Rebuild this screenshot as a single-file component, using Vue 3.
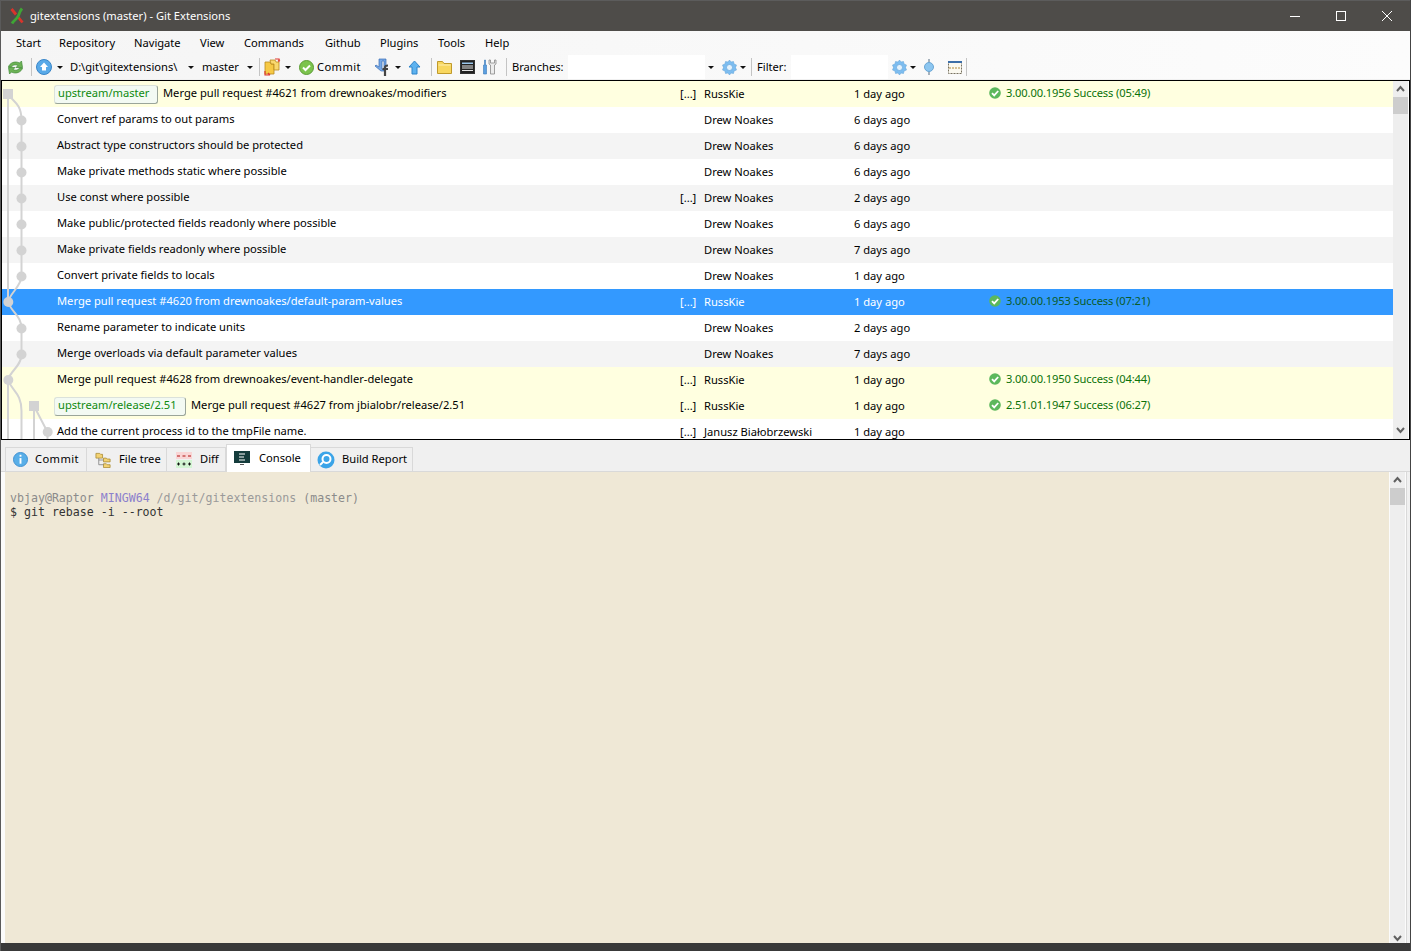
<template>
  <div class="window">
    <header class="titlebar">
      <svg class="app-logo" width="16" height="18" viewBox="0 0 16 18">
        <path d="M2.500 2l4.500 5.500M9.500 10.500l4 5" stroke="#d9342b" stroke-width="2.800" fill="none" />
        <path d="M3 16.500c1.500-3 4.500-4 6-7s1.500-5 4-8" stroke="#3fa535" stroke-width="2.800" fill="none" />
      </svg>
      <span class="title-text">gitextensions (master) - Git Extensions</span>
      <div class="window-btns">
        <svg width="46" height="30" viewBox="0 0 46 30"><path d="M18 15.500h10" stroke="#fff" /></svg>
        <svg width="46" height="30" viewBox="0 0 46 30"><rect x="18.500" y="10.500" width="9" height="9" fill="none" stroke="#fff" /></svg>
        <svg width="46" height="30" viewBox="0 0 46 30"><path d="M18 10l10 10M28 10l-10 10" stroke="#fff" /></svg>
      </div>
    </header>

    <nav class="menubar">
      <span v-for="m in menus" :key="m.label" class="menu-item" :style="{ width: m.w + 'px' }">{{ m.label }}</span>
    </nav>

    <div class="toolbar">
      <svg class="ic ml-7" width="17" height="15" viewBox="0 0 17 15">
        <g fill="#6db356" stroke="#418a38" stroke-width=".7">
          <path d="M1.500 7C2.500 3 8 .5 12.500 3L14.500 1l1 6.500-6.500 0 2-2C8.500 4 5.500 5 4.500 7z" />
          <path d="M15.500 8C14.500 12 9 14.500 4.500 12L2.500 14l-1-6.500 6.500 0-2 2C8.500 11 11.500 10 12.500 8z" />
        </g>
      </svg>
      <i class="sep s1"></i>
      <svg class="ic s2" width="16" height="16" viewBox="0 0 16 16">
        <circle cx="8" cy="8" r="7.500" fill="#58a9e8" stroke="#3a86c8" />
        <path d="M8 3.500l4 4.500H10v3.500H6V8H4z" fill="#fff" />
      </svg>
      <i class="caret s3"></i>
      <span class="tb-text t-path">D:\git\gitextensions\</span>
      <i class="caret s4"></i>
      <span class="tb-text t-branch">master</span>
      <i class="caret s5"></i>
      <i class="sep s6"></i>
      <svg class="ic s7" width="17" height="18" viewBox="0 0 17 18">
        <path d="M1 4h5l1 2h3v10H1z" fill="#f6c945" stroke="#b98a1e" stroke-width=".8" />
        <path d="M6 2h5l1 2h3v8h-5V6H7z" fill="#f9d86e" stroke="#b98a1e" stroke-width=".8" />
        <path d="M11 1h4v3M14 3l2-1M1 13v4h5M4 15l2 2" stroke="#e0392f" fill="none" stroke-width="1.200" />
      </svg>
      <i class="caret s8"></i>
      <svg class="ic s9" width="15" height="15" viewBox="0 0 15 15">
        <circle cx="7.500" cy="7.500" r="7" fill="#7cc34d" stroke="#5c9c35" />
        <path d="M4 7.500l2.500 2.500 4.500-4.500" fill="none" stroke="#fff" stroke-width="2" />
      </svg>
      <span class="tb-text t-commit">Commit</span>
      <svg class="ic s10" width="17" height="19" viewBox="0 0 17 19">
        <path d="M5 1h7v7l-2 2v-7H8v8l2 2-3 0-6-5 1-1 3 2z" fill="#76a8e6" stroke="#3a6fb5" stroke-width=".7" />
        <path d="M11 18V9.500c0-1.500 1-2 3-2M8.500 11H14" fill="none" stroke="#444" stroke-width="2.200" />
      </svg>
      <i class="caret s11"></i>
      <svg class="ic s12" width="13" height="15" viewBox="0 0 13 15">
        <path d="M6.500 1L12 7H9v7H4V7H1z" fill="#5db2ef" stroke="#2f84c9" />
      </svg>
      <i class="sep s13"></i>
      <svg class="ic s14" width="15" height="14" viewBox="0 0 15 14">
        <path d="M.5 1.500h5l1.500 2h7.500v10H.5z" fill="#f8d760" stroke="#c09a2c" />
        <path d="M1.500 5h12" stroke="#fdeeb0" />
      </svg>
      <svg class="ic s15" width="15" height="14" viewBox="0 0 15 14">
        <rect x=".5" y=".5" width="14" height="13" fill="#222" stroke="#333" />
        <path d="M2 2.500h11v1.500H2z" fill="#9cc8ee" />
        <path d="M2 6h11M2 8h11M2 10.500h11" stroke="#e4e4e4" />
      </svg>
      <svg class="ic s16" width="16" height="16" viewBox="0 0 16 16">
        <path d="M2.500 1v5h-1v9h3V6h-1V1z" fill="#5b9fe0" stroke="#3a78b8" stroke-width=".6" />
        <path d="M7 1v4l1.500 1v9h4V6L14 5V1h-1.500v3h-4V1z" fill="#ececec" stroke="#888" stroke-width=".8" />
      </svg>
      <i class="sep s17"></i>
      <span class="tb-text t-branches">Branches:</span>
      <span class="field f-branches"></span>
      <i class="caret s18"></i>
      <svg class="ic s19" width="15" height="15" viewBox="0 0 15 15">
        <path d="M7.500 0l1.500 2 2.500-.5.500 2.500 2.500 1-1 2.500 1 2.500-2.500 1-.5 2.500-2.500-.5L7.500 15 6 13l-2.500.5L3 11 .5 10l1-2.500-1-2.500L3 4l.5-2.500L6 2z" fill="#7dbdf0" stroke="#5a9ed6" stroke-width=".5" />
        <circle cx="7.500" cy="7.500" r="3" fill="#e3f2fd" stroke="#5a9ed6" stroke-width=".6" />
      </svg>
      <i class="caret s20"></i>
      <i class="sep s21"></i>
      <span class="tb-text t-filter">Filter:</span>
      <span class="field f-filter"></span>
      <svg class="ic s22" width="15" height="15" viewBox="0 0 15 15">
        <path d="M7.500 0l1.500 2 2.500-.5.500 2.500 2.500 1-1 2.500 1 2.500-2.500 1-.5 2.500-2.500-.5L7.500 15 6 13l-2.500.5L3 11 .5 10l1-2.500-1-2.500L3 4l.5-2.500L6 2z" fill="#7dbdf0" stroke="#5a9ed6" stroke-width=".5" />
        <circle cx="7.500" cy="7.500" r="3" fill="#e3f2fd" stroke="#5a9ed6" stroke-width=".6" />
      </svg>
      <i class="caret s23"></i>
      <svg class="ic s24" width="12" height="16" viewBox="0 0 12 16">
        <path d="M6 0v16" stroke="#8a9aa8" stroke-width="1.500" />
        <circle cx="6" cy="8" r="4.500" fill="#8cc6f0" stroke="#6ba6d4" />
      </svg>
      <svg class="ic s25" width="14" height="13" viewBox="0 0 14 13">
        <rect x=".5" y="1.500" width="13" height="11" fill="#fbf9f0" stroke="#77715f" stroke-dasharray="2 1" />
        <path d="M0 1h14" stroke="#3c6ea8" stroke-width="2" />
        <path d="M1 7h12" stroke="#b08a3c" stroke-dasharray="2 1" />
      </svg>
      <i class="sep s26"></i>
    </div>

    <section class="revisions">
      <div class="rows">
        <div
          v-for="(c, i) in commits"
          :key="i"
          class="row"
          :class="{ alt: i % 2 === 0 && i > 0, mine: c.hl, selected: c.sel }"
        >
          <div class="c-msg" :class="{ 'has-ref': c.ref }">
            <span v-if="c.ref" class="ref" :style="{ width: c.refW + 'px' }">{{ c.ref }}</span>
            <span>{{ c.msg }}</span>
          </div>
          <div class="c-more">{{ c.more ? '[...]' : '' }}</div>
          <div class="c-author">{{ c.author }}</div>
          <div class="c-date">{{ c.date }}</div>
          <div class="c-build">
            <template v-if="c.build">
              <svg width="12" height="12" viewBox="0 0 12 12">
                <circle cx="6" cy="6" r="5.800" fill="#5cb85c" />
                <path d="M3 6.200l2.200 2.200L9.200 4" fill="none" stroke="#fff" stroke-width="1.800" />
              </svg>
              <span>{{ c.build }}</span>
            </template>
          </div>
        </div>
      </div>

      <svg class="graph" width="60" height="358" viewBox="0 0 60 358">
        <g fill="none" stroke="#d3d3d3" stroke-width="2">
          <path d="M6 13V221" />
          <path d="M6 13c4 7 13.500 9 13.500 26V195c0 10-11.500 17-13.500 26" />
          <path d="M6 221c4 11 13.500 14 13.500 26.500v26c0 11.500-11.500 16.500-13.500 25.500" />
          <path d="M6 299V360" />
          <path d="M6 299c4 11 13.500 13 13.500 31V360" />
          <path d="M32 325V360" />
          <path d="M32 325l13.500 26V360" />
        </g>
        <g fill="#d3d3d3">
          <rect x="1" y="8" width="10" height="10" />
          <circle v-for="n in graphNodes" :key="n.y" :cx="n.x" :cy="n.y" r="5" />
          <rect x="27" y="320" width="10" height="10" />
        </g>
      </svg>

      <div class="vscroll v1">
        <svg width="15" height="16" viewBox="0 0 15 16"><path d="M4 10l3.500-4 3.500 4" fill="none" stroke="#606060" stroke-width="2" /></svg>
        <div class="thumb"></div>
        <div class="grow"></div>
        <svg class="arrow-down" width="15" height="16" viewBox="0 0 15 16"><path d="M4 6l3.500 4 3.500-4" fill="none" stroke="#606060" stroke-width="2" /></svg>
      </div>
    </section>

    <div class="tabs">
      <div v-for="t in tabs" :key="t.label" class="tab" :class="['tab-' + t.icon, { active: t.active }]" :style="{ width: t.w + 'px' }">
        <svg v-if="t.icon === 'commit'" width="15" height="15" viewBox="0 0 16 16">
          <circle cx="8" cy="8" r="7.500" fill="#58aee8" stroke="#3f8fd0" />
          <rect x="7" y="3" width="2" height="2" fill="#fff" />
          <rect x="7" y="6.500" width="2" height="6" fill="#fff" />
        </svg>
        <svg v-else-if="t.icon === 'tree'" width="17" height="16" viewBox="0 0 18 16">
          <path d="M1 1h4l1 1h2v4H1zM9 6h3l1 1h3v3H9zM9 12h3l1 1h3v3H9z" fill="#f3d273" stroke="#a8892f" stroke-width=".8" />
          <path d="M4 6v7h5M4 8h5" fill="none" stroke="#777" stroke-width=".8" />
        </svg>
        <svg v-else-if="t.icon === 'diff'" width="16" height="16" viewBox="0 0 16 16">
          <rect width="16" height="7" fill="#f9d5d5" />
          <rect y="8" width="16" height="8" fill="#d3f5d3" />
          <path d="M1 4h3M6.500 4h3M12 4h3" stroke="#b01010" />
          <path d="M1 12h3M2.500 10.500v3M6.500 12h3M8 10.500v3M12 12h3M13.500 10.500v3" stroke="#111" />
        </svg>
        <svg v-else-if="t.icon === 'console'" width="16" height="16" viewBox="0 0 16 16">
          <rect width="16" height="12" fill="#143c3c" />
          <path d="M5 3h6M5 6h5M5 9h6" stroke="#fff" />
          <rect x="6" y="13" width="4" height="1" fill="#555" />
        </svg>
        <svg v-else width="18" height="18" viewBox="0 0 18 18">
          <circle cx="9" cy="9" r="8.500" fill="#3ba4e8" />
          <circle cx="9.500" cy="8" r="4" fill="none" stroke="#fff" stroke-width="2" />
          <path d="M6 11l-3 3" stroke="#fff" stroke-width="2" />
        </svg>
        <span>{{ t.label }}</span>
      </div>
    </div>

    <section class="console-pane">
      <div class="console">
        <div class="prompt"><span class="p-user">vbjay@Raptor</span> <span class="p-host">MINGW64</span> <span class="p-path">/d/git/gitextensions</span> <span class="p-user">(master)</span></div>
        <div class="cmd">$ git rebase -i --root</div>
      </div>
      <div class="vscroll v2">
        <svg width="15" height="16" viewBox="0 0 15 16"><path d="M4 10l3.500-4 3.500 4" fill="none" stroke="#606060" stroke-width="2" /></svg>
        <div class="thumb"></div>
        <div class="grow"></div>
        <svg class="arrow-down" width="15" height="16" viewBox="0 0 15 16"><path d="M4 6l3.500 4 3.500-4" fill="none" stroke="#606060" stroke-width="2" /></svg>
      </div>
    </section>

    <footer class="bottom"></footer>
  </div>
</template>

<script setup>
const menus = [
  { label: 'Start', w: 43 },
  { label: 'Repository', w: 75 },
  { label: 'Navigate', w: 66 },
  { label: 'View', w: 44 },
  { label: 'Commands', w: 81 },
  { label: 'Github', w: 55 },
  { label: 'Plugins', w: 58 },
  { label: 'Tools', w: 47 },
  { label: 'Help', w: 40 },
]

const commits = [
  { ref: 'upstream/master', refW: 104, msg: 'Merge pull request #4621 from drewnoakes/modifiers', more: true, author: 'RussKie', date: '1 day ago', build: '3.00.00.1956 Success (05:49)', hl: true },
  { msg: 'Convert ref params to out params', author: 'Drew Noakes', date: '6 days ago' },
  { msg: 'Abstract type constructors should be protected', author: 'Drew Noakes', date: '6 days ago' },
  { msg: 'Make private methods static where possible', author: 'Drew Noakes', date: '6 days ago' },
  { msg: 'Use const where possible', more: true, author: 'Drew Noakes', date: '2 days ago' },
  { msg: 'Make public/protected fields readonly where possible', author: 'Drew Noakes', date: '6 days ago' },
  { msg: 'Make private fields readonly where possible', author: 'Drew Noakes', date: '7 days ago' },
  { msg: 'Convert private fields to locals', author: 'Drew Noakes', date: '1 day ago' },
  { msg: 'Merge pull request #4620 from drewnoakes/default-param-values', more: true, author: 'RussKie', date: '1 day ago', build: '3.00.00.1953 Success (07:21)', sel: true },
  { msg: 'Rename parameter to indicate units', author: 'Drew Noakes', date: '2 days ago' },
  { msg: 'Merge overloads via default parameter values', author: 'Drew Noakes', date: '7 days ago' },
  { msg: 'Merge pull request #4628 from drewnoakes/event-handler-delegate', more: true, author: 'RussKie', date: '1 day ago', build: '3.00.00.1950 Success (04:44)', hl: true },
  { ref: 'upstream/release/2.51', refW: 132, msg: 'Merge pull request #4627 from jbialobr/release/2.51', more: true, author: 'RussKie', date: '1 day ago', build: '2.51.01.1947 Success (06:27)', hl: true },
  { msg: 'Add the current process id to the tmpFile name.', more: true, author: 'Janusz Białobrzewski', date: '1 day ago' },
]

const graphNodes = [
  { x: 19.5, y: 39.5 }, { x: 19.5, y: 65.5 }, { x: 19.5, y: 91.5 }, { x: 19.5, y: 117.5 },
  { x: 19.5, y: 143.5 }, { x: 19.5, y: 169.5 }, { x: 19.5, y: 195.5 }, { x: 6.3, y: 221 },
  { x: 19.5, y: 247.5 }, { x: 19.5, y: 273.5 }, { x: 6.3, y: 299 }, { x: 45.7, y: 351 },
]

const tabs = [
  { label: 'Commit', icon: 'commit', w: 82 },
  { label: 'File tree', icon: 'tree', w: 80 },
  { label: 'Diff', icon: 'diff', w: 59 },
  { label: 'Console', icon: 'console', w: 85, active: true },
  { label: 'Build Report', icon: 'build', w: 102 },
]
</script>

<style>
html, body { margin: 0; padding: 0; background: #f0f0f0; }
</style>

<style scoped>
.window {
  width: 1411px;
  height: 951px;
  display: flex;
  flex-direction: column;
  overflow: hidden;
  position: relative;
  font-family: "Noto Sans", "Open Sans", sans-serif;
  font-size: 11.150px;
  color: #000;
  background: #f0f0f0;
  border-right: 1px solid #444;
  border-left: 1px solid #5a5a5a;
  box-sizing: border-box;
}

.titlebar {
  height: 31px;
  flex: none;
  display: flex;
  align-items: center;
  background: #4e4c49;
  border-top: 1px solid #5c5c5c;
  box-sizing: border-box;
  padding-left: 8px;
  color: #fff;
}
.app-logo { margin-right: 5px; }
.title-text { margin-bottom: 2px; }
.window-btns { margin-left: auto; display: flex; }

.menubar {
  height: 24px;
  flex: none;
  display: flex;
  align-items: center;
  padding-left: 15px;
  background: linear-gradient(to right, #f5f5f5, #fcfcfc);
}
.menu-item { display: block; white-space: nowrap; margin-bottom: 2px; }

.toolbar {
  height: 25px;
  flex: none;
  display: flex;
  align-items: center;
  background: linear-gradient(to right, #f5f5f5, #fcfcfc);
  border-bottom: 1px solid #f0f0f0;
  box-sizing: border-box;
}
.ic { flex: none; display: block; }
.tb-text { flex: none; white-space: nowrap; margin-bottom: 2px; }
.sep { flex: none; width: 1px; height: 18px; background: #c4c4c4; }
.caret {
  flex: none;
  width: 0;
  height: 0;
  border-left: 3px solid transparent;
  border-right: 3px solid transparent;
  border-top: 3px solid #111;
}
.field { flex: none; height: 24px; background: #fff; }
.ml-7 { margin-left: 6px; }
.s1 { margin-left: 7px; }
.s2 { margin-left: 4px; }
.s3 { margin-left: 5px; }
.t-path { margin-left: 7px; width: 110px; }
.s4 { margin-left: 8px; }
.t-branch { margin-left: 8px; width: 37px; }
.s5 { margin-left: 8px; }
.s6 { margin-left: 6px; }
.s7 { margin-left: 4px; }
.s8 { margin-left: 4px; }
.s9 { margin-left: 8px; }
.t-commit { margin-left: 3px; width: 44px; letter-spacing: .4px; }
.s10 { margin-left: 13px; }
.s11 { margin-left: 4px; }
.s12 { margin-left: 7px; }
.s13 { margin-left: 10px; }
.s14 { margin-left: 5px; }
.s15 { margin-left: 8px; }
.s16 { margin-left: 7px; }
.s17 { margin-left: 8px; }
.t-branches { margin-left: 5px; width: 51px; }
.f-branches { margin-left: 5px; width: 137px; }
.s18 { margin-left: 3px; }
.s19 { margin-left: 8px; }
.s20 { margin-left: 3px; }
.s21 { margin-left: 5px; }
.t-filter { margin-left: 5px; width: 29px; }
.f-filter { margin-left: 5px; width: 97px; }
.s22 { margin-left: 4px; }
.s23 { margin-left: 3px; }
.s24 { margin-left: 7px; }
.s25 { margin-left: 13px; }
.s26 { margin-left: 4px; }

.revisions {
  height: 360px;
  flex: none;
  position: relative;
  display: flex;
  border: 1px solid #000;
  box-sizing: border-box;
  background: #fff;
  overflow: hidden;
}
.rows { flex: 1; min-width: 0; overflow: hidden; }
.row {
  height: 26px;
  display: grid;
  grid-template-columns: 676px 24px 150px 135px 1fr;
  padding-left: 2px;
  padding-bottom: 2px;
  box-sizing: border-box;
  align-items: center;
  white-space: nowrap;
}
.row.alt { background: #f4f4f4; }
.row.mine { background: #ffffe0; }
.row.selected { background: #3399ff; color: #fff; }
.c-msg {
  padding-left: 53px;
  position: relative;
  top: -1px;
  display: flex;
  align-items: center;
  gap: 5px;
}
.c-msg.has-ref { padding-left: 50px; }
.ref {
  height: 19px;
  line-height: 14px;
  margin-top: 5px;
  padding-left: 3px;
  box-sizing: border-box;
  border: 1px solid #dbe2db;
  border-right-color: #9aa59a;
  border-bottom-color: #9aa59a;
  border-radius: 3px;
  background: #f3faf3;
  color: #0f8a0f;
}
.c-build {
  display: flex;
  align-items: center;
  gap: 5px;
  color: #0b7209;
  position: relative;
  top: -1px;
  letter-spacing: -.13px;
}
.c-build svg { margin-top: 2px; }
.row.selected .c-build { color: #0a5c2a; }

.graph { position: absolute; left: 0; top: 0; pointer-events: none; }

.vscroll {
  flex: none;
  width: 15px;
  display: flex;
  flex-direction: column;
  background: #eeeeee;
}
.vscroll svg { flex: none; display: block; }
.thumb { flex: none; height: 17px; background: #cdcdcd; }
.grow { flex: 1; }
.v1 { margin-right: 1px; }
.v1 .arrow-down { margin-bottom: 1px; }

.tabs {
  height: 32px;
  flex: none;
  display: flex;
  align-items: flex-end;
  padding-left: 4px;
  box-sizing: border-box;
  border-bottom: 1px solid #d9d9d9;
}
.tab {
  height: 24px;
  flex: none;
  display: flex;
  align-items: center;
  gap: 7px;
  padding-left: 7px;
  box-sizing: border-box;
  border: 1px solid #d9d9d9;
  border-bottom: none;
  border-left: none;
  white-space: nowrap;
}
.tab span { margin-bottom: 3px; }
.tab-commit { border-left: 1px solid #d9d9d9; }
.tab-commit span { letter-spacing: .4px; }
.tab-tree { padding-left: 8px; gap: 7px; }
.tab-diff { padding-left: 9px; gap: 8px; }
.tab.active {
  height: 28px;
  margin-bottom: -1px;
  background: #fff;
  border-left: 1px solid #d9d9d9;
  gap: 9px;
  position: relative;
}
.tab-build { padding-left: 6px; }

.console-pane {
  flex: 1;
  min-height: 0;
  display: flex;
  margin-right: 3px;
  padding-left: 4px;
  border-right: 1px solid #d9d9d9;
  background: #fbfbfb;
}
.console {
  flex: 1;
  background: #efe8d6;
  padding: 19px 0 0 5px;
  font-family: "DejaVu Sans Mono", "Liberation Mono", monospace;
  font-size: 11.600px;
  line-height: 14px;
  color: #333;
  white-space: pre;
}
.p-user { color: #8b8b8b; }
.p-host { color: #8c80cc; }
.p-path { color: #9a9a9a; }
.v2 { margin: 0 1px; }
.v2 .arrow-down { margin-bottom: -3px; }

.bottom { height: 8px; flex: none; background: #393939; position: relative; }
</style>
